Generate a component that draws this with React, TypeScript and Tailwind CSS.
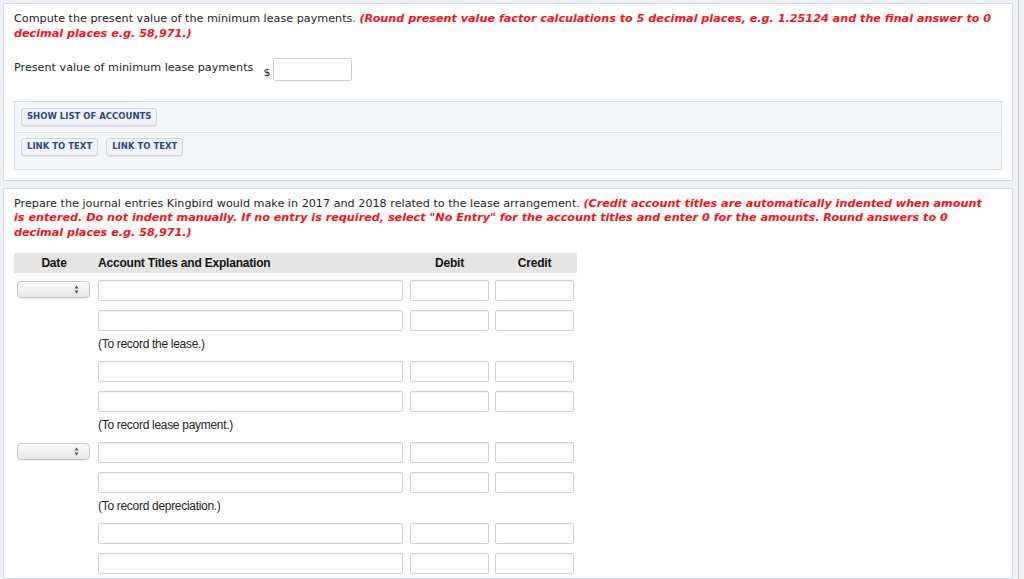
import React from "react";

const V = { fontFamily: '"DejaVu Sans", Verdana, sans-serif' };
const H = { fontFamily: '"Liberation Sans", Arial, Helvetica, sans-serif' };

function Btn({ children }: { children: React.ReactNode }) {
  return (
    <div
      className="h-[18px] px-[5px] flex items-center rounded-[3px] border border-[#cdd5df] bg-[#f0f3f7] text-[8.5px] font-bold text-[#2d4a7c] shadow-[0_1px_0_#dfe4ea]"
      style={V}
    >
      {children}
    </div>
  );
}

function Select() {
  return (
    <div className="ml-[3px] mt-[1px] w-[73px] h-[17px] rounded-[4px] border border-[#c4c4c4] bg-gradient-to-b from-[#fbfbfb] to-[#e6e6e6] flex items-center justify-end pr-[10px] shadow-[0_1px_1px_rgba(0,0,0,0.08)]">
      <svg width="5" height="9" viewBox="0 0 5 9">
        <path d="M2.5 0.5 L4.6 3.6 L0.4 3.6 Z" fill="#555" />
        <path d="M2.5 8.5 L4.6 5.4 L0.4 5.4 Z" fill="#555" />
      </svg>
    </div>
  );
}

function Field({ w }: { w: string }) {
  return <div className={`${w} h-[21px] rounded-[2px] border border-[#cfcfcf] bg-white shadow-[inset_0_1px_1px_rgba(0,0,0,0.04)]`} />;
}

function Row({ date }: { date?: boolean }) {
  return (
    <div className="flex items-start">
      <div className="w-[84px]">{date ? <Select /> : null}</div>
      <Field w="w-[305px]" />
      <div className="w-[7px]" />
      <Field w="w-[79px]" />
      <div className="w-[6px]" />
      <Field w="w-[79px]" />
    </div>
  );
}

function Label({ children }: { children: React.ReactNode }) {
  return (
    <div className="pl-[84px] mt-[6px] mb-[10px] text-[12px] leading-[14px] text-[#222] tracking-[-0.3px]" style={H}>
      {children}
    </div>
  );
}

export default function App() {
  return (
    <div className="w-[1024px] h-[579px] overflow-hidden bg-[#eef2f7] flex">
      <div className="flex-1 pl-[3px] pt-[3px] pr-[5px] flex flex-col gap-[7px]">
        {/* Panel 1 */}
        <div className="bg-white border border-[#d3dae3] px-[10px] pt-[7px] pb-[10px]" style={V}>
          <div className="text-[11.2px] leading-[15px] text-[#1e1e1e] whitespace-nowrap">
            Compute the present value of the minimum lease payments.{" "}
            <span className="text-[#f5131b] font-bold italic">
              (Round present value factor calculations to 5 decimal places, e.g. 1.25124 and the final answer to 0
              <br />
              decimal places e.g. 58,971.)
            </span>
          </div>
          <div className="mt-[16px] flex items-center">
            <span className="text-[11.2px] text-[#1e1e1e] mb-[2px]">Present value of minimum lease payments</span>
            <span className="ml-[10px] mt-[8px] text-[11.2px] text-[#1e1e1e]">$</span>
            <div className="ml-[2px] w-[79px] h-[23px] rounded-[2px] border border-[#cfcfcf] bg-white" />
          </div>
          <div className="mt-[19px] border border-[#d5dce5] bg-[#f4f7fa]">
            <div className="pl-[6px] pt-[6px] pb-[6px] border-b border-[#d9dfe7] flex">
              <Btn>SHOW LIST OF ACCOUNTS</Btn>
            </div>
            <div className="pl-[6px] pt-[5px] pb-[13px] flex gap-[8px]">
              <Btn>LINK TO TEXT</Btn>
              <Btn>LINK TO TEXT</Btn>
            </div>
          </div>
        </div>

        {/* Panel 2 */}
        <div className="flex-1 bg-white border border-[#d3dae3] px-[10px] pt-[8px]">
          <div className="text-[11.2px] leading-[14.5px] text-[#1e1e1e] whitespace-nowrap" style={V}>
            Prepare the journal entries Kingbird would make in 2017 and 2018 related to the lease arrangement.{" "}
            <span className="text-[#f5131b] font-bold italic">
              (Credit account titles are automatically indented when amount
              <br />
              is entered. Do not indent manually. If no entry is required, select "No Entry" for the account titles and enter 0 for the amounts. Round answers to 0
              <br />
              decimal places e.g. 58,971.)
            </span>
          </div>

          <div className="mt-[13px] w-[563px]">
            <div className="h-[20px] bg-[#e5e5e5] flex items-center text-[12px] font-bold text-[#111] tracking-[-0.2px]" style={H}>
              <div className="w-[80px] text-center">Date</div>
              <div className="w-[4px]" />
              <div className="w-[312px]">Account Titles and Explanation</div>
              <div className="w-[79px] text-center">Debit</div>
              <div className="w-[6px]" />
              <div className="w-[79px] text-center">Credit</div>
            </div>

            <div className="mt-[7px] flex flex-col">
              <div className="flex flex-col gap-[9px]">
                <Row date />
                <Row />
              </div>
              <Label>(To record the lease.)</Label>
              <div className="flex flex-col gap-[9px]">
                <Row />
                <Row />
              </div>
              <Label>(To record lease payment.)</Label>
              <div className="flex flex-col gap-[9px]">
                <Row date />
                <Row />
              </div>
              <Label>(To record depreciation.)</Label>
              <div className="flex flex-col gap-[9px]">
                <Row />
                <Row />
              </div>
            </div>
          </div>
        </div>
      </div>
      <div className="w-[6px] border-l border-[#c9c9c9] bg-[#f0f0f0]" />
    </div>
  );
}
